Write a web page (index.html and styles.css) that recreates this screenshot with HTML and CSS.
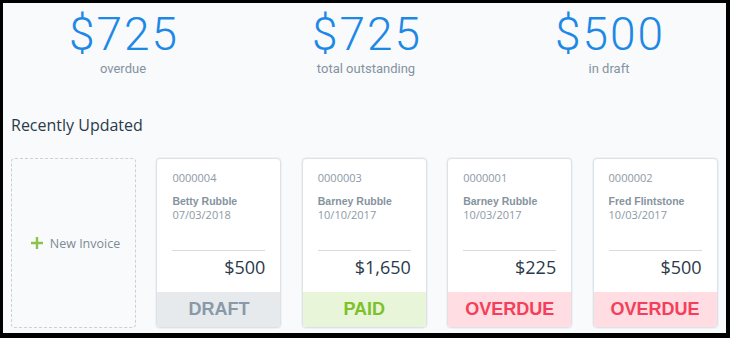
FILE: index.html
```html
<!DOCTYPE html>
<html lang="en">
  <head>
    <meta charset="UTF-8" />
    <meta name="viewport" content="width=device-width, initial-scale=1.0" />
    <title>Invoices</title>
    <link rel="stylesheet" href="styles.css">
  </head>
  <body>
    <div class="page">
      <!-- totals -->
      <section class="stats">
        <div class="stat">
          <div class="stat-value">$725</div>
          <div class="stat-label">overdue</div>
        </div>
        <div class="stat">
          <div class="stat-value">$725</div>
          <div class="stat-label">total outstanding</div>
        </div>
        <div class="stat">
          <div class="stat-value">$500</div>
          <div class="stat-label">in draft</div>
        </div>
      </section>

      <h2 class="title">Recently Updated</h2>

      <!-- invoice cards -->
      <section class="cards">
        <a href="#" class="new-invoice">
          <svg class="plus" width="12" height="12" viewBox="0 0 12 12">
            <path d="M6 0v12M0 6h12" stroke="#8bc34a" stroke-width="2.4" fill="none" />
          </svg>
          New Invoice
        </a>

        <div class="card">
          <div class="card-body">
            <div class="card-no">0000004</div>
            <div class="card-name">Betty Rubble</div>
            <div class="card-date">07/03/2018</div>
            <div class="card-amount">$500</div>
          </div>
          <div class="card-status draft">DRAFT</div>
        </div>

        <div class="card">
          <div class="card-body">
            <div class="card-no">0000003</div>
            <div class="card-name">Barney Rubble</div>
            <div class="card-date">10/10/2017</div>
            <div class="card-amount">$1,650</div>
          </div>
          <div class="card-status paid">PAID</div>
        </div>

        <div class="card">
          <div class="card-body">
            <div class="card-no">0000001</div>
            <div class="card-name">Barney Rubble</div>
            <div class="card-date">10/03/2017</div>
            <div class="card-amount">$225</div>
          </div>
          <div class="card-status overdue">OVERDUE</div>
        </div>

        <div class="card">
          <div class="card-body">
            <div class="card-no">0000002</div>
            <div class="card-name">Fred Flintstone</div>
            <div class="card-date">10/03/2017</div>
            <div class="card-amount">$500</div>
          </div>
          <div class="card-status overdue">OVERDUE</div>
        </div>
      </section>
    </div>
  </body>
</html>
```

FILE: styles.css
```css
* {
  margin: 0;
  padding: 0;
  box-sizing: border-box;
}
html,
body {
  font-family: "Open Sans", "Liberation Sans", sans-serif;
  background-color: #000;
}
a {
  text-decoration: none;
}
.page {
  display: flow-root;
  margin: 3px 4px 5px 3px;
  height: 330px;
  background-color: #f8fafc;
  padding: 0 8px;
}
.stats {
  display: grid;
  grid-template-columns: repeat(3, 1fr);
  margin: 4px -12.5px 0 -9.5px;
}
.stat {
  text-align: center;
  font-family: Roboto, "Open Sans", sans-serif;
}
.stat-value {
  font-size: 46px;
  font-weight: 300;
  line-height: 54px;
  letter-spacing: 2px;
  padding-left: 2px;
  color: #1e88e5;
}
.stat-label {
  font-size: 13px;
  line-height: 15px;
  color: #8593a0;
}
.title {
  margin-top: 38px;
  font-size: 16px;
  font-weight: 400;
  line-height: 22px;
  color: #2b3a4a;
}
.cards {
  display: flex;
  gap: 20.4px;
  margin-top: 22px;
}
.new-invoice {
  width: 125px;
  height: 170px;
  border: 1.5px dashed #c9d0d6;
  border-radius: 4px;
  display: flex;
  align-items: center;
  justify-content: center;
  gap: 7px;
  padding-left: 4px;
  font-size: 12.5px;
  color: #7d8a96;
}
.card {
  width: 125px;
  height: 170px;
  background-color: #fff;
  border: 1px solid #dce2e7;
  border-radius: 4px;
  box-shadow: 0 0 0 1px #eef2f5;
  display: flex;
  flex-direction: column;
  overflow: hidden;
}
.card-body {
  flex: 1;
  padding: 12px 15px 0 15px;
}
.card-no {
  font-size: 11px;
  line-height: 14px;
  color: #8d99a5;
}
.card-name {
  margin-top: 9px;
  font-family: "Liberation Sans", sans-serif;
  font-size: 10.5px;
  font-weight: 700;
  line-height: 14px;
  color: #8593a0;
}
.card-date {
  font-size: 11px;
  line-height: 14px;
  color: #8d99a5;
}
.card-amount {
  margin-top: 28px;
  border-top: 1px solid #d5dbe0;
  padding-top: 4px;
  text-align: right;
  font-size: 18px;
  line-height: 24px;
  color: #2b3a4a;
}
.card-status {
  height: 35px;
  line-height: 35px;
  text-align: center;
  font-family: "Liberation Sans", sans-serif;
  font-size: 18px;
  font-weight: 700;
}
.draft {
  background-color: #e6eaed;
  color: #8999a7;
}
.paid {
  background-color: #e8f5d9;
  color: #7cc22a;
}
.overdue {
  background-color: #ffdde2;
  color: #f43f5a;
}
```
